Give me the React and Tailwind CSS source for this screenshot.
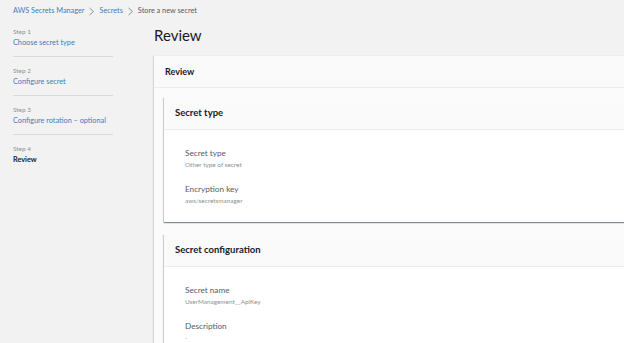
const steps = [
  { label: "Step 1", name: "Choose secret type" },
  { label: "Step 2", name: "Configure secret" },
  { label: "Step 3", name: "Configure rotation – optional" },
  { label: "Step 4", name: "Review", current: true },
];

const cards = [
  {
    title: "Secret type",
    fields: [
      { k: "Secret type", v: "Other type of secret" },
      { k: "Encryption key", v: "aws/secretsmanager" },
    ],
  },
  {
    title: "Secret configuration",
    fields: [
      { k: "Secret name", v: "UserManagement__ApiKey" },
      { k: "Description", v: "-" },
    ],
  },
];

function Chevron() {
  return (
    <svg width="7" height="9" viewBox="0 0 7 9" className="mx-[4px]">
      <path d="M1.5 1 L5.5 4.5 L1.5 8" fill="none" stroke="#879596" strokeWidth="1" />
    </svg>
  );
}

function Card({ title, fields }) {
  return (
    <div className="bg-white shadow-[0_1px_1px_0_rgba(0,28,36,0.3),1px_1px_1px_0_rgba(0,28,36,0.15),-1px_1px_1px_0_rgba(0,28,36,0.15)]">
      <div className="h-[33px] flex items-center px-[11px] bg-[#fafafa] border-b border-[#eaeded]">
        <span className="text-[9.5px] font-bold text-[#16191f]">{title}</span>
      </div>
      <div className="pl-[21px] pt-[17px] pb-[15px]">
        {fields.map((f, i) => (
          <div key={i} className={i > 0 ? "mt-[12px]" : ""}>
            <div className="text-[8.2px] leading-[12px] text-[#545b64]">{f.k}</div>
            <div className="text-[6.4px] leading-[12px] text-[#879596]">{f.v}</div>
          </div>
        ))}
      </div>
    </div>
  );
}

export default function App() {
  return (
    <div className="w-[624px] h-[343px] overflow-hidden bg-[#f2f2f2] font-['Lato',sans-serif]">
      <div className="h-[22px] flex items-center pl-[13px] text-[7.3px] whitespace-nowrap">
        <span className="text-[#3d7cbc]">AWS Secrets Manager</span>
        <Chevron />
        <span className="text-[#3d7cbc]">Secrets</span>
        <Chevron />
        <span className="text-[#545b64]">Store a new secret</span>
      </div>
      <div className="flex">
        <div className="w-[113px] pl-[13px] shrink-0">
          {steps.map((s, i) => (
            <div
              key={i}
              className={`pb-[8px] ${i < steps.length - 1 ? "border-b border-[#d5dbdb]" : ""} ${i > 0 ? "pt-[8px]" : "pt-[4px]"}`}
            >
              <div className="text-[6.4px] leading-[11px] text-[#879596]">{s.label}</div>
              <div
                className={`text-[7.3px] leading-[11px] whitespace-nowrap ${s.current ? "font-bold text-[#16191f]" : "text-[#3d7cbc]"}`}
              >
                {s.name}
              </div>
            </div>
          ))}
        </div>
        <div className="ml-[41px] flex-1 min-w-0">
          <div className="h-[34px] flex items-start">
            <h1 className="text-[15px] leading-[28px] text-[#16191f] -mt-[1px]">Review</h1>
          </div>
          <div className="bg-white shadow-[0_1px_1px_0_rgba(0,28,36,0.2),-1px_0_1px_0_rgba(0,28,36,0.1)] w-[500px]">
            <div className="h-[32px] flex items-center px-[11px] bg-[#fafafa] border-b border-[#eaeded]">
              <span className="text-[9px] font-bold text-[#16191f]">Review</span>
            </div>
            <div className="pl-[10px] pt-[9px] flex flex-col gap-[12px] bg-[#fbfbfb]">
              {cards.map((c, i) => (
                <Card key={i} {...c} />
              ))}
            </div>
          </div>
        </div>
      </div>
    </div>
  );
}
